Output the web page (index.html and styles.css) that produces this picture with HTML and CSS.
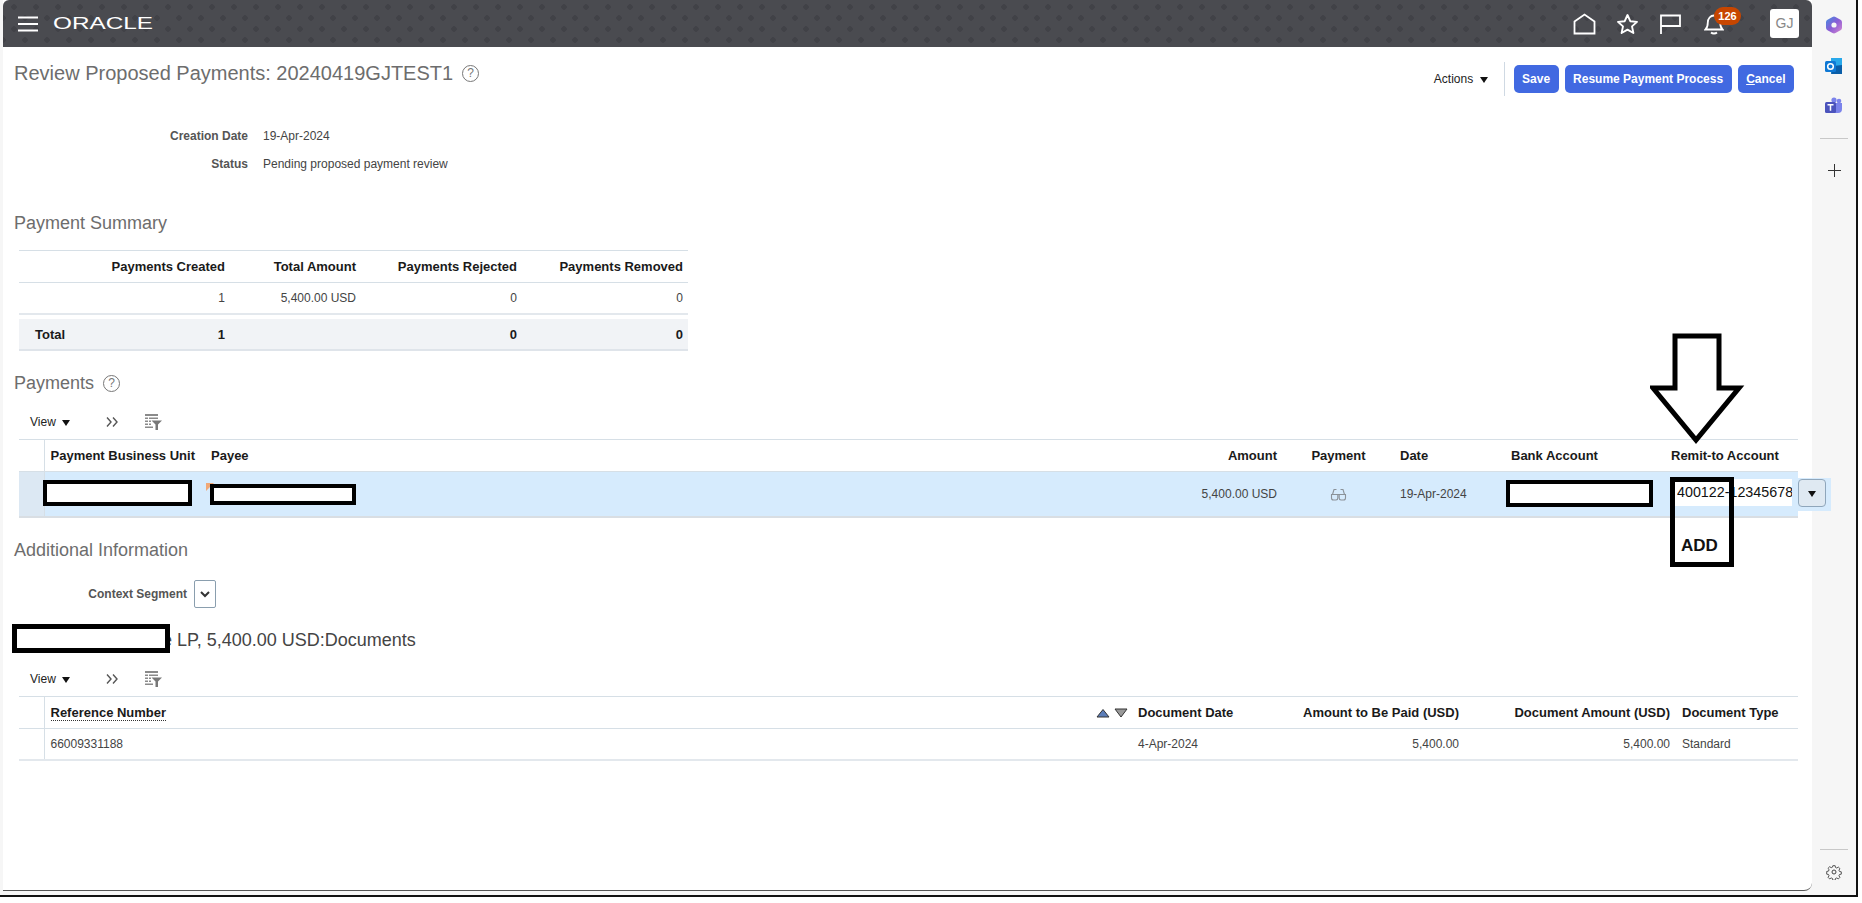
FILE: index.html
```html
<!DOCTYPE html>
<html lang="en">
<head>
  <meta charset="UTF-8">
  <title>Review Proposed Payments: 20240419GJTEST1</title>
  <link rel="stylesheet" href="styles.css">
</head>
<body>
<div class="frame">
  <div class="main">
    <!-- barra superior -->
    <header class="topbar">
      <svg class="burger" width="20" height="16" viewBox="0 0 20 16"><path d="M0 1.500h20M0 8h20M0 14.500h20" stroke="#fff" stroke-width="2"/></svg>
      <span class="logo">ORACLE</span>
      <span class="spacer"></span>
      <span class="hicon"><svg width="23" height="22" viewBox="0 0 23 22"><path d="M1.500 20.500V8.500L11.500 1.500l10 7v12z" fill="none" stroke="#fff" stroke-width="1.800"/></svg></span>
      <span class="hicon"><svg width="23" height="22" viewBox="0 0 23 22"><path d="M11.500 2l2.800 6.200 6.700.7-5 4.500 1.400 6.600-5.900-3.400-5.900 3.400 1.400-6.600-5-4.500 6.700-.7z" fill="none" stroke="#fff" stroke-width="1.900" stroke-linejoin="round"/></svg></span>
      <span class="hicon"><svg width="21" height="20" viewBox="0 0 21 20"><path d="M1 20V1.500h19v10.500H1" fill="none" stroke="#fff" stroke-width="1.800"/></svg></span>
      <span class="hicon">
        <svg width="20" height="22" viewBox="0 0 20 22"><path d="M1.500 16.500c2-2 2.300-4 2.300-7 0-4 2.700-7 6.200-7s6.200 3 6.200 7c0 3 .3 5 2.300 7zM7 19.500c1.500 1.300 4.500 1.300 6 0" fill="none" stroke="#fff" stroke-width="1.800"/></svg>
        <span class="badge">126</span>
      </span>
      <span class="avatar">GJ</span>
    </header>

    <!-- cabecalho da pagina -->
    <div class="page-head">
      <h1>Review Proposed Payments: 20240419GJTEST1</h1>
      <span class="help help-title">?</span>
      <span class="spacer"></span>
      <span class="actions">Actions <i class="caret"></i></span>
      <span class="sep"></span>
      <button class="btn">Save</button>
      <button class="btn">Resume Payment Process</button>
      <button class="btn"><u>C</u>ancel</button>
    </div>

    <div class="info-row"><span class="info-label">Creation Date</span><span>19-Apr-2024</span></div>
    <div class="info-row"><span class="info-label">Status</span><span>Pending proposed payment review</span></div>

    <h2 class="sec sec-summary">Payment Summary</h2>
    <table class="grid summary">
      <colgroup><col class="s0"><col class="s1"><col class="s2"><col class="s3"><col class="s4"></colgroup>
      <tr class="head"><th class="r" colspan="2">Payments Created</th><th class="r">Total Amount</th><th class="r">Payments Rejected</th><th class="r">Payments Removed</th></tr>
      <tr class="body-row"><td class="r" colspan="2">1</td><td class="r">5,400.00 USD</td><td class="r">0</td><td class="r">0</td></tr>
      <tr class="gap"><td colspan="5"></td></tr>
      <tr class="total"><td class="total-label">Total</td><td class="r">1</td><td></td><td class="r">0</td><td class="r">0</td></tr>
    </table>

    <h2 class="sec sec-payments">Payments <span class="help">?</span></h2>
    <div class="toolbar">
      <span class="view">View <i class="caret"></i></span>
      <svg class="more" width="12" height="10" viewBox="0 0 12 10"><path d="M1 .5 5 5 1 9.500M7 .5 11 5 7 9.500" fill="none" stroke="#555" stroke-width="1.400"/></svg>
      <svg class="qbe" width="17" height="16" viewBox="0 0 17 16"><path d="M0 0h13v2H0zM0 3.500h3v1.500H0zM4 3.500h9v1.500H4zM0 6.500h3V8H0zM0 9.500h3V11H0zM0 12.500h8V14H0zM4 6.500h2V8H4zM4 9.500h2V11H4z" fill="#8a8a8a"/><path d="M6.500 6.500H17L13 10.500V16h-2.500v-5.500z" fill="#777"/></svg>
    </div>
    <table class="grid payments">
      <colgroup><col class="sel"><col class="p1"><col class="p2"><col class="p3"><col class="p4"><col class="p5"><col class="p6"><col class="p7"></colgroup>
      <tr class="head">
        <th class="selcell"></th><th>Payment Business Unit</th><th>Payee</th><th class="r">Amount</th><th class="c">Payment</th><th>Date</th><th>Bank Account</th><th>Remit-to Account</th>
      </tr>
      <tr class="picked">
        <td class="selcell"></td><td></td>
        <td><i class="flag-mark"></i></td>
        <td class="r">5,400.00 USD</td>
        <td class="c"><svg width="17" height="13" viewBox="0 0 17 13"><path d="M1 6.500h15M2.500 6.500 4 1.500h2.500M14.500 6.500 13 1.500h-2.500M1.500 6.500v3.500q0 2 2 2h2.500q1.800 0 1.800-2V6.500M9.200 6.500v3.500q0 2 1.800 2h2.500q2 0 2-2V6.500" fill="none" stroke="#8b9299" stroke-width="1.100"/></svg></td>
        <td>19-Apr-2024</td><td></td>
        <td class="lov-cell"><div class="lov"><input class="lov-input" value="400122-12345678" readonly><button class="lov-btn"><i class="caret small"></i></button></div></td>
      </tr>
    </table>

    <h2 class="sec sec-extra">Additional Information</h2>
    <div class="context">
      <span class="context-label">Context Segment</span>
      <span class="select"><svg width="10" height="7" viewBox="0 0 10 7"><path d="M1 1l4 4 4-4" fill="none" stroke="#333" stroke-width="2"/></svg></span>
    </div>

    <h2 class="doc-title">e LP, 5,400.00 USD:Documents</h2>
    <div class="toolbar">
      <span class="view">View <i class="caret"></i></span>
      <svg class="more" width="12" height="10" viewBox="0 0 12 10"><path d="M1 .5 5 5 1 9.500M7 .5 11 5 7 9.500" fill="none" stroke="#555" stroke-width="1.400"/></svg>
      <svg class="qbe" width="17" height="16" viewBox="0 0 17 16"><path d="M0 0h13v2H0zM0 3.500h3v1.500H0zM4 3.500h9v1.500H4zM0 6.500h3V8H0zM0 9.500h3V11H0zM0 12.500h8V14H0zM4 6.500h2V8H4zM4 9.500h2V11H4z" fill="#8a8a8a"/><path d="M6.500 6.500H17L13 10.500V16h-2.500v-5.500z" fill="#777"/></svg>
    </div>
    <table class="grid docs">
      <colgroup><col class="sel"><col class="d1"><col class="d2"><col class="d3"><col class="d4"><col class="d5"></colgroup>
      <tr class="head">
        <th class="selcell"></th>
        <th><div class="sort-head"><span class="sorted">Reference Number</span>
          <svg width="32" height="10" viewBox="0 0 32 10"><path d="M1 9 7 1.500 13 9z" fill="#5b7db8" stroke="#333"/><path d="M19 1h12l-6 8z" fill="#999" stroke="#333"/></svg></div></th>
        <th>Document Date</th><th class="r">Amount to Be Paid (USD)</th><th class="r">Document Amount (USD)</th><th>Document Type</th>
      </tr>
      <tr class="body-row">
        <td class="selcell"></td><td>66009331188</td><td>4-Apr-2024</td><td class="r">5,400.00</td><td class="r">5,400.00</td><td>Standard</td>
      </tr>
    </table>
  </div>

  <!-- barra lateral do navegador -->
  <aside class="side">
    <svg class="side-icon" width="18" height="18" viewBox="0 0 18 18">
      <defs><linearGradient id="cp" x1="0" y1="0" x2="1" y2="1"><stop offset="0" stop-color="#3f8ee0"/><stop offset=".5" stop-color="#8a5cd6"/><stop offset="1" stop-color="#d98ad0"/></linearGradient></defs>
      <path d="M9 .5a3 3 0 0 1 1.500.4l5 2.800A3 3 0 0 1 17 6.300v5.400a3 3 0 0 1-1.500 2.600l-5 2.800a3 3 0 0 1-3 0l-5-2.800A3 3 0 0 1 1 11.700V6.300a3 3 0 0 1 1.500-2.600l5-2.800A3 3 0 0 1 9 .5z" fill="url(#cp)"/><circle cx="9" cy="9" r="2.600" fill="#f6f6f6"/></svg>
    <svg class="side-icon" width="18" height="18" viewBox="0 0 18 18">
      <path d="M6 1h11v15H6z" fill="#28a8ea"/><path d="M8 9l9-1v9H6z" fill="#0a5ea8"/><rect x="0" y="4" width="11" height="11" rx="1.500" fill="#0f78d4"/><circle cx="5.500" cy="9.500" r="2.800" fill="none" stroke="#fff" stroke-width="1.500"/></svg>
    <svg class="side-icon" width="18" height="18" viewBox="0 0 18 18">
      <circle cx="14" cy="4" r="2.300" fill="#7b83eb"/><circle cx="9" cy="3" r="2.600" fill="#7b83eb"/><path d="M5 6h12v6q0 4-4 4H9q-4 0-4-4z" fill="#7b83eb"/><rect x="0" y="5" width="11" height="11" rx="1.500" fill="#4b53bc"/><path d="M2.500 7.800h6M5.500 7.800v6" stroke="#fff" stroke-width="1.500"/></svg>
    <span class="side-line"></span>
    <svg class="side-plus" width="13" height="13" viewBox="0 0 13 13"><path d="M6.500 0v13M0 6.500h13" stroke="#333" stroke-width="1"/></svg>
    <span class="spacer"></span>
    <span class="side-line"></span>
    <svg class="side-gear" width="16" height="16" viewBox="0 0 16 16"><path d="M6.700 1h2.600l.4 2 1.400.6 1.700-1.100 1.800 1.800-1.100 1.700.6 1.400 2 .4v2.600l-2 .4-.6 1.400 1.100 1.700-1.800 1.800-1.700-1.100-1.400.6-.4 2H6.700l-.4-2-1.400-.6-1.700 1.100-1.800-1.800 1.100-1.700-.6-1.400-2-.4V7.400l2-.4.6-1.400-1.100-1.700 1.800-1.800 1.700 1.100 1.400-.6z" fill="none" stroke="#444" transform="translate(.8 .8) scale(.9)"/><circle cx="8" cy="8" r="2" fill="none" stroke="#444"/></svg>
  </aside>

  <!-- anotacoes por cima da captura -->
  <i class="redact r-unit"></i>
  <i class="redact r-payee"></i>
  <i class="redact r-bank"></i>
  <i class="redact r-doc"></i>
  <i class="mark-box"></i>
  <b class="mark-add">ADD</b>
  <svg class="mark-arrow" width="96" height="112" viewBox="0 0 96 112"><path d="M25 3h44v52h20L46 107 3 55h22z" fill="none" stroke="#000" stroke-width="5"/></svg>
</div>
</body>
</html>
```
FILE: styles.css
```css
html, body {
  margin: 0;
  padding: 0;
  height: 903px;
  overflow: hidden;
  background: #fff;
  font-family: "Liberation Sans", Arial, sans-serif;
  font-size: 12px;
  color: #444;
}

.frame {
  position: relative;
  display: flex;
  box-sizing: border-box;
  width: 1858px;
  height: 897px;
  padding-left: 3px;
  background: #f6f6f6;
  border-right: 2px solid #111;
  border-bottom: 2px solid #111;
}

.spacer { flex: 1; }

.main {
  box-sizing: border-box;
  width: 1809px;
  height: 891px;
  background: #fff;
  border-bottom: 1px solid #555;
  border-bottom-right-radius: 8px;
}

/* barra superior */
.topbar {
  display: flex;
  align-items: center;
  height: 47px;
  background-color: #4a4b50;
  background-image:
    radial-gradient(circle, #414247 2.5px, transparent 3px),
    radial-gradient(circle, #414247 2.5px, transparent 3px);
  background-size: 22px 22px;
  background-position: 0 -4px, 11px 7px;
  border-top-left-radius: 6px;
  border-top-right-radius: 6px;
  padding-right: 13px;
}
.burger { margin-left: 15px; }
.logo {
  display: inline-block;
  margin-left: 15px;
  color: #fff;
  font-size: 17px;
  line-height: 20px;
  transform: scaleX(1.43);
  transform-origin: left center;
}
.hicon {
  position: relative;
  display: flex;
  align-items: center;
  justify-content: center;
  width: 43px;
  height: 47px;
}
.badge {
  position: absolute;
  left: 22px;
  top: 7px;
  width: 27px;
  height: 18px;
  line-height: 18px;
  text-align: center;
  border-radius: 9px;
  background: #c74600;
  color: #fff;
  font-size: 11px;
  font-weight: bold;
}
.avatar {
  box-sizing: border-box;
  width: 29px;
  height: 29px;
  margin-left: 35px;
  line-height: 29px;
  text-align: center;
  border-radius: 3px;
  background: #fff;
  color: #888;
  font-size: 14px;
}

/* cabecalho da pagina */
.page-head {
  display: flex;
  align-items: flex-start;
  height: 75px;
  box-sizing: border-box;
  padding: 14px 18px 0 11px;
}
h1 {
  margin: 0;
  font-size: 20px;
  font-weight: normal;
  line-height: 24px;
  color: #6d6d6d;
}
.help {
  display: inline-block;
  box-sizing: border-box;
  width: 17px;
  height: 17px;
  line-height: 15px;
  text-align: center;
  border: 1px solid #777;
  border-radius: 50%;
  color: #777;
  font-size: 12px;
  font-weight: normal;
}
.help-title { margin: 4px 0 0 9px; }
.actions {
  margin-top: 11px;
  color: #222;
  line-height: 14px;
}
.caret {
  display: inline-block;
  width: 0;
  height: 0;
  margin-left: 3px;
  vertical-align: 0;
  border-left: 4.5px solid transparent;
  border-right: 4.5px solid transparent;
  border-top: 6px solid #111;
}
.caret.small {
  margin: 0;
  border-left-width: 4px;
  border-right-width: 4px;
  border-top-width: 6px;
}
.sep {
  width: 1px;
  height: 34px;
  margin: 1px 9px 0 16px;
  background: #cfd9e3;
}
.btn {
  height: 28px;
  margin: 4px 0 0 6px;
  padding: 0 8.5px;
  border: none;
  border-radius: 5px;
  background: #4169e1;
  color: #fff;
  font-family: inherit;
  font-size: 12px;
  font-weight: bold;
}
.sep + .btn { margin-left: 0; }

.info-row {
  display: flex;
  height: 28px;
  align-items: center;
  gap: 15px;
}
.info-label {
  width: 245px;
  text-align: right;
  font-weight: bold;
  color: #555;
}

/* titulos de secao */
.sec {
  margin: 0 0 0 11px;
  font-size: 18px;
  font-weight: normal;
  line-height: 24px;
  color: #6d6d6d;
}
.sec-summary { margin-top: 33px; }
.sec-payments { margin-top: 20px; }
.sec-payments .help { margin-left: 4px; vertical-align: 2px; }
.sec-extra { margin-top: 20px; }

/* tabelas */
.grid {
  table-layout: fixed;
  border-collapse: collapse;
  margin-left: 16px;
  border-top: 1px solid #d6dfe6;
}
.grid th, .grid td {
  padding: 0 6px;
  text-align: left;
  white-space: nowrap;
}
.grid th { color: #1a1a1a; font-size: 13px; font-weight: bold; }
.grid .r { text-align: right; }
.grid .c { text-align: center; }
.head th { height: 31px; border-bottom: 1px solid #d6dfe6; }
.body-row td { height: 30px; border-bottom: 2px solid #e3e8ed; }

.summary { width: 669px; margin-top: 15px; }
.summary th, .summary td { padding-right: 5px; }
.s0 { width: 100px; }
.s1 { width: 111px; }
.s2 { width: 131px; }
.s3 { width: 161px; }
.s4 { width: 166px; }
.gap td { height: 4px; padding: 0; }
.total td {
  height: 30px;
  background: #f1f3f6;
  border-bottom: 2px solid #dfe4ea;
  font-size: 13px;
  font-weight: bold;
  color: #1a1a1a;
}
.grid .total-label { padding-left: 16px; }

.toolbar {
  display: flex;
  align-items: center;
  box-sizing: border-box;
  height: 44px;
  padding: 10px 0 0 27px;
}
.view { width: 49px; color: #222; }
.more { margin-left: 27px; }
.qbe { margin-left: 27px; }

.payments, .docs { width: 1779px; }
.sel { width: 25px; }
.p1 { width: 161px; }
.p2 { width: 895px; }
.p3 { width: 183px; }
.p4 { width: 111px; }
.p5 { width: 111px; }
.p6 { width: 160px; }
.p7 { width: 133px; }
.selcell { border-right: 1px solid #d6dfe6; padding: 0 !important; }

.picked td {
  height: 44px;
  background: #d6ebfd;
  border-bottom: 2px solid #d9dee3;
}
.picked .selcell { background: #dce8f3; }
.picked svg { display: block; margin: 0 auto; }
.flag-mark {
  position: absolute;
  left: 206px;
  top: 483px;
  width: 0;
  height: 0;
  border-top: 8px solid #f0a878;
  border-right: 8px solid transparent;
}
.picked .lov-cell { padding: 0 0 0 6px; overflow: visible; }
.lov {
  display: flex;
  box-sizing: border-box;
  width: 160px;
  height: 33px;
  padding: 1px 5px 5px 3px;
  background: #d6ebfd;
}
.lov-input {
  box-sizing: border-box;
  width: 118px;
  height: 27px;
  padding: 0 0 0 3px;
  border: none;
  background: #fff;
  color: #111;
  font-family: inherit;
  font-size: 14.3px;
  outline: none;
}
.lov-btn {
  box-sizing: border-box;
  width: 29px;
  height: 28px;
  margin-left: 6px;
  padding: 0;
  border: 1px solid #8fa6bb;
  border-radius: 4px;
  background: #dfe9f2;
}

.context {
  display: flex;
  align-items: center;
  height: 28px;
  margin-top: 18px;
}
.context-label {
  width: 184px;
  text-align: right;
  font-weight: bold;
  color: #555;
}
.select {
  display: flex;
  align-items: center;
  justify-content: center;
  box-sizing: border-box;
  width: 22px;
  height: 28px;
  margin-left: 7px;
  border: 1px solid #8a9eae;
  border-radius: 2px;
}

.doc-title {
  margin: 20px 0 0 159px;
  font-size: 18px;
  font-weight: normal;
  line-height: 24px;
  color: #444;
}

.d1 { width: 1088px; }
.d2 { width: 138px; }
.d3 { width: 195px; }
.d4 { width: 211px; }
.d5 { width: 122px; }
.sort-head {
  display: flex;
  align-items: center;
  justify-content: space-between;
  margin-right: -2px;
}
.sorted { border-bottom: 1px dotted #333; }

/* barra lateral */
.side {
  display: flex;
  flex-direction: column;
  align-items: center;
  width: 44px;
  height: 895px;
  padding-top: 16px;
  box-sizing: border-box;
}
.side-icon { margin-bottom: 22.5px; }
.side-line {
  width: 28px;
  height: 1px;
  background: #c8c8c8;
}
.side-plus { margin-top: 25px; }
.side-gear { margin: 14px 0 15px; }

/* anotacoes */
.redact {
  position: absolute;
  box-sizing: border-box;
  background: #fff;
  border: 4px solid #000;
}
.r-unit { left: 43px; top: 480px; width: 149px; height: 26px; }
.r-payee { left: 210px; top: 484px; width: 146px; height: 21px; }
.r-bank { left: 1506px; top: 480px; width: 147px; height: 27px; }
.r-doc { left: 12px; top: 624px; width: 158px; height: 29px; border-width: 5px; }
.mark-box {
  position: absolute;
  box-sizing: border-box;
  left: 1670px;
  top: 477px;
  width: 64px;
  height: 90px;
  border: 5px solid #000;
}
.mark-add {
  position: absolute;
  left: 1681px;
  top: 536px;
  font-size: 17px;
  line-height: 20px;
  color: #111;
}
.mark-arrow {
  position: absolute;
  left: 1650px;
  top: 333px;
}
```
